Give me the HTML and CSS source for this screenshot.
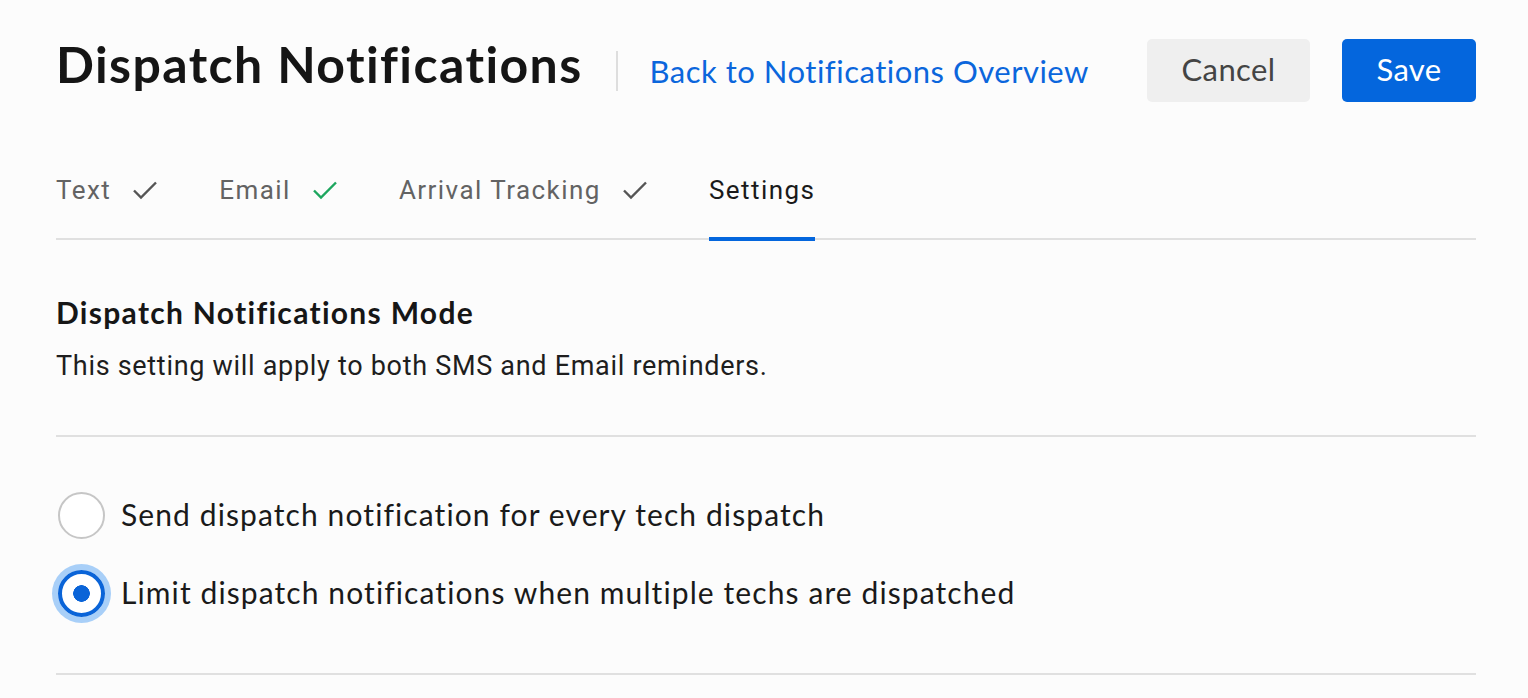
FILE: index.html
```html
<!DOCTYPE html>
<html lang="en">
<head>
<meta charset="utf-8">
<title>Dispatch Notifications</title>
<link rel="stylesheet" href="styles.css">
</head>
<body>
<div class="page">
  <header class="header">
    <h1 class="title">Dispatch Notifications</h1>
    <span class="sep"></span>
    <a class="link" href="#">Back to Notifications Overview</a>
    <div class="actions">
      <button class="btn btn-cancel">Cancel</button>
      <button class="btn btn-save">Save</button>
    </div>
  </header>

  <nav class="tabs">
    <div class="tab">Text
      <svg class="check" viewBox="0 0 26 20"><path d="M2 10.5 L9 17.5 L24 2.5" fill="none" stroke="#555" stroke-width="2.4"/></svg>
    </div>
    <div class="tab">Email
      <svg class="check" viewBox="0 0 26 20"><path d="M2 10.5 L9 17.5 L24 2.5" fill="none" stroke="#1da65e" stroke-width="2.4"/></svg>
    </div>
    <div class="tab">Arrival Tracking
      <svg class="check" viewBox="0 0 26 20"><path d="M2 10.5 L9 17.5 L24 2.5" fill="none" stroke="#555" stroke-width="2.4"/></svg>
    </div>
    <div class="tab active">Settings</div>
  </nav>

  <section class="section">
    <h2 class="section-title">Dispatch Notifications Mode</h2>
    <p class="section-desc">This setting will apply to both SMS and Email reminders.</p>
  </section>

  <div class="options">
    <label class="option">
      <span class="radio"></span>
      <span class="option-label">Send dispatch notification for every tech dispatch</span>
    </label>
    <label class="option">
      <span class="radio checked"></span>
      <span class="option-label">Limit dispatch notifications when multiple techs are dispatched</span>
    </label>
  </div>
</div>
</body>
</html>
```

FILE: styles.css
```css
html, body {
  margin: 0;
  padding: 0;
  background: #fcfcfc;
}
.page {
  width: 1420px;
  margin-left: 56px;
  font-family: Lato, "Open Sans", sans-serif;
}
.header {
  display: flex;
  align-items: center;
  padding-top: 39px;
  height: 63px;
}
.title {
  margin: 0 0 14px 0;
  font-family: Lato, sans-serif;
  font-weight: 700;
  font-size: 50px;
  color: #151515;
  letter-spacing: 1.4px;
}
.sep {
  width: 2px;
  height: 40px;
  background: #dedede;
  margin: 0 32px 0 33px;
}
.link {
  font-size: 31px;
  color: #0b66dc;
  text-decoration: none;
  letter-spacing: 0.5px;
}
.actions {
  margin-left: auto;
  display: flex;
  gap: 32px;
}
.btn {
  height: 63px;
  border: none;
  border-radius: 5px;
  font-family: Lato, sans-serif;
  font-size: 31px;
  padding: 0 0 3px;
  cursor: pointer;
  letter-spacing: 0.4px;
}
.btn-cancel {
  width: 163px;
  background: #efefef;
  color: #444;
}
.btn-save {
  width: 134px;
  background: #0466dd;
  color: #fff;
}
.tabs {
  display: flex;
  gap: 61px;
  margin-top: 73px;
  border-bottom: 2px solid #e0e0e0;
}
.tab {
  display: flex;
  align-items: center;
  gap: 21px;
  font-family: Roboto, sans-serif;
  font-size: 26px;
  line-height: 30px;
  letter-spacing: 1.45px;
  color: #636363;
  padding-bottom: 32px;
  border-bottom: 4px solid transparent;
  margin-bottom: -3px;
}
.tab.active {
  color: #1a1a1a;
  border-bottom-color: #0466dd;
}
.check {
  width: 26px;
  height: 20px;
}
.section {
  padding: 54px 0 52px;
  border-bottom: 2px solid #e0e0e0;
}
.section-title {
  margin: 0;
  font-family: Lato, sans-serif;
  font-weight: 700;
  font-size: 30px;
  line-height: 36px;
  letter-spacing: 1.3px;
  color: #161616;
}
.section-desc {
  margin: 19px 0 0;
  font-family: Roboto, sans-serif;
  font-size: 27px;
  line-height: 34px;
  letter-spacing: 0.7px;
  color: #1e1e1e;
}
.options {
  display: flex;
  flex-direction: column;
  gap: 31px;
  padding: 55px 0 56px;
  border-bottom: 2px solid #e0e0e0;
}
.option {
  display: flex;
  align-items: center;
  gap: 16px;
  margin-left: 2px;
}
.radio {
  box-sizing: border-box;
  width: 47px;
  height: 47px;
  border-radius: 50%;
  border: 2px solid #c6c6c6;
  background: #fff;
  flex: none;
}
.radio.checked {
  border: 4px solid #0a64d8;
  box-shadow: 0 0 0 6px #a8cff8;
  background: radial-gradient(circle, #0a64d8 0 8px, #fff 8.6px);
}
.option-label {
  font-family: Lato, sans-serif;
  font-size: 30px;
  line-height: 36px;
  letter-spacing: 1.1px;
  color: #1a1a1a;
  padding-bottom: 4px;
}
```
